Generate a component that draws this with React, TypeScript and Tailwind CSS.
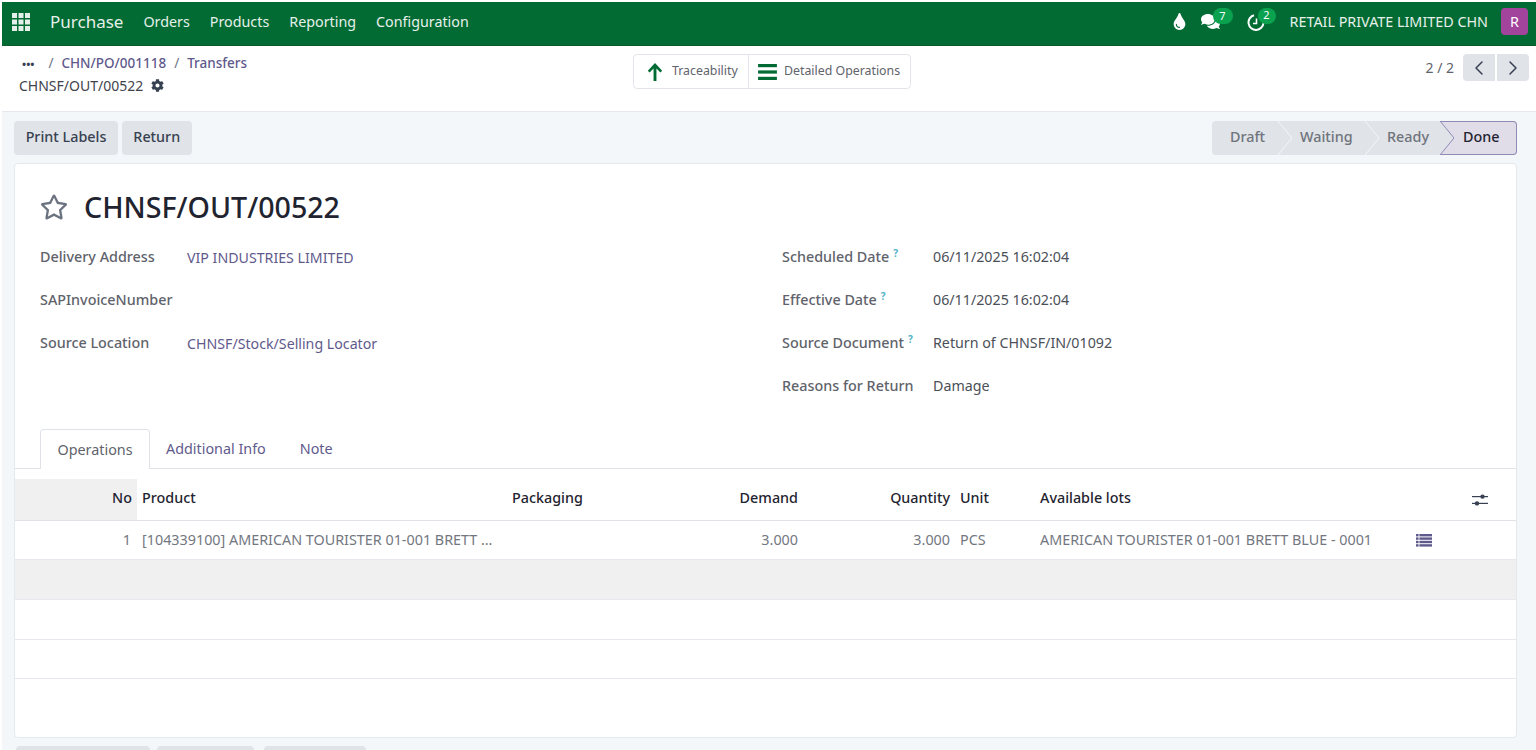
import { FaCog, FaComments, FaRegStar, FaTint } from "react-icons/fa"
import { ChevronLeft, ChevronRight } from "lucide-react"

const columns = "grid grid-cols-[122px_370px_146px_150px_152px_80px_371px_60px_49px]"

function AppsIcon() {
  return (
    <svg viewBox="0 0 18 18" className="h-[18px] w-[18px] fill-[#e6f0ea]">
      {[0, 6.5, 13].map((y) =>
        [0, 6.5, 13].map((x) => <rect key={`${x}-${y}`} x={x} y={y} width="5" height="5" />),
      )}
    </svg>
  )
}

function ActivityIcon() {
  return (
    <svg viewBox="0 0 18 18" className="h-[18px] w-[18px] fill-none stroke-white stroke-2">
      <path d="M7 2.2A7.5 7.5 0 1 0 16.5 10" />
      <path d="M9.5 5.5v5H6" strokeWidth="1.6" />
    </svg>
  )
}

function SlidersIcon() {
  return (
    <svg viewBox="0 0 16 14" className="h-[14px] w-[16px] fill-[#374151]">
      <rect x="0" y="3" width="16" height="1.2" />
      <rect x="0" y="9.8" width="16" height="1.2" />
      <circle cx="10.5" cy="3.6" r="2.2" />
      <circle cx="5" cy="10.4" r="2.2" />
    </svg>
  )
}

function ListIcon() {
  return (
    <svg viewBox="0 0 16 13" className="h-[13px] w-[16px] fill-[#5f5a8c]">
      {[0, 3.4, 6.8, 10.2].map((y) => (
        <g key={y}>
          <rect x="0" y={y} width="2.6" height="2.4" />
          <rect x="3.4" y={y} width="12.6" height="2.4" />
        </g>
      ))}
    </svg>
  )
}

function Field({ label, help, value, link, labelWidth }: { label: string; help?: boolean; value?: string; link?: boolean; labelWidth: string }) {
  return (
    <div className="flex h-[43px] items-center">
      <div className={`${labelWidth} font-medium text-[#5f636b]`}>
        {label}
        {help && <sup className="ml-1 text-[10px] font-bold text-[#4fb3c8]">?</sup>}
      </div>
      {value && <div className={link ? "mt-[2px] text-[14.2px] text-[#5f5a8c]" : "text-[14.25px] text-[#4b5058]"}>{value}</div>}
    </div>
  )
}

function StatusStep({ label, width, padding }: { label: string; width: string; padding: string }) {
  return (
    <div className={`relative flex h-full items-center pb-[2px] font-medium text-[#6f747c] ${width} ${padding}`}>
      {label}
      <svg viewBox="0 0 14 34" className="absolute left-full top-0 h-[34px] w-[14px] fill-none stroke-[#f4f7f9]">
        <path d="M0 0 14 17 0 34" />
      </svg>
    </div>
  )
}

export default function App() {
  return (
    <div className="flex h-[750px] w-[1536px] flex-col overflow-hidden bg-white pl-[2px] pt-[2px] text-[14.35px] font-['Noto_Sans',sans-serif]">
      {/* Navbar */}
      <div className="flex h-[44px] shrink-0 items-center border-b border-[#0a5a2e] bg-[#016b33] pb-[4px] text-[#e6f0ea]">
        <div className="ml-[10px] mr-[20px]">
          <AppsIcon />
        </div>
        <div className="mr-[20px] text-[17px]">Purchase</div>
        <div className="flex gap-[20px] text-[14.3px]">
          <span>Orders</span>
          <span>Products</span>
          <span>Reporting</span>
          <span>Configuration</span>
        </div>
        <div className="ml-auto flex items-center">
          <FaTint className="mr-[15px] h-[17px] w-[13px] text-white" />
          <div className="relative mr-[27px]">
            <FaComments className="h-[17px] w-[19px] text-white" />
            <span className="absolute -top-[5px] left-[12px] flex h-[16px] w-[20px] items-center justify-center rounded-full bg-[#0aa14f] text-[11px] text-white">7</span>
          </div>
          <div className="relative mr-[25px]">
            <ActivityIcon />
            <span className="absolute -top-[5px] left-[11px] flex h-[16px] w-[18px] items-center justify-center rounded-full bg-[#0aa14f] text-[11px] text-white">2</span>
          </div>
          <span className="mr-[13px]">RETAIL PRIVATE LIMITED CHN</span>
          <div className="mr-[8px] flex h-[27px] w-[27px] items-center justify-center rounded-[4px] bg-[#a2449c] text-white">R</div>
        </div>
      </div>

      {/* Control panel */}
      <div className="flex h-[66px] shrink-0 border-b border-[#e5e8ec]">
        <div className="w-[631px] pl-[17px] pt-[7px]">
          <div className="flex items-center text-[13.5px] text-[#5f5a8c]">
            <span className="ml-[3px] mr-[14px] text-[11px] font-bold leading-none text-[#374151]">•••</span>
            <span className="mr-[8px] text-[#6b7280]">/</span>
            <span className="font-medium">CHN/PO/001118</span>
            <span className="mx-[8px] text-[#6b7280]">/</span>
            <span className="font-medium">Transfers</span>
          </div>
          <div className="mt-[2px] flex items-center text-[14px] text-[#3f444c]">
            CHNSF/OUT/00522
            <FaCog className="ml-[8px] h-[13px] w-[13px] text-[#374151]" />
          </div>
        </div>
        <div className="mt-[8px] flex h-[35px] rounded-[4px] border border-[#e2e6ea] text-[12.35px] text-[#5f636b]">
          <div className="flex w-[115px] items-center border-r border-[#e2e6ea] pl-[13px]">
            <svg viewBox="0 0 16 20" className="mr-[9px] h-[18px] w-[16px] fill-[#016b33]">
              <path d="M8 0 16 8.5 14 10.5 9.6 6V20H6.4V6L2 10.5 0 8.5Z" />
            </svg>
            Traceability
          </div>
          <div className="flex w-[161px] items-center pl-[9px]">
            <svg viewBox="0 0 20 17" className="mr-[7px] h-[16px] w-[19px] fill-[#016b33]">
              <rect width="20" height="3.4" />
              <rect y="6.8" width="20" height="3.4" />
              <rect y="13.6" width="20" height="3.4" />
            </svg>
            Detailed Operations
          </div>
        </div>
        <div className="ml-auto mr-[7px] mt-[8px] flex items-start">
          <span className="mr-[9px] mt-[3px] text-[14px] text-[#5f636b]">2 / 2</span>
          <div className="flex gap-[2px]">
            <div className="flex h-[27px] w-[32px] items-center justify-center rounded-l-[4px] bg-[#e0e3e7]">
              <ChevronLeft className="h-6 w-6 text-[#374151]" strokeWidth={1.5} />
            </div>
            <div className="flex h-[27px] w-[32px] items-center justify-center rounded-r-[4px] bg-[#e0e3e7]">
              <ChevronRight className="h-6 w-6 text-[#374151]" strokeWidth={1.5} />
            </div>
          </div>
        </div>
      </div>

      {/* Content */}
      <div className="flex min-h-0 flex-1 flex-col bg-[#f4f7f9] pl-[12px] pr-[19px] pt-[9px]">
        <div className="mb-[8px] flex h-[34px] shrink-0 items-stretch justify-between">
          <div className="flex gap-[4px] font-medium text-[#374151]">
            <div className="flex w-[104px] items-center justify-center rounded-[4px] bg-[#e0e3e7] pb-[3px]">Print Labels</div>
            <div className="flex w-[69.5px] items-center justify-center rounded-[4px] bg-[#e0e3e7] pb-[3px]">Return</div>
          </div>
          <div className="flex items-center rounded-[4px] bg-[#e0e3e7]">
            <StatusStep label="Draft" width="w-[66px]" padding="pl-[18px]" />
            <StatusStep label="Waiting" width="w-[87px]" padding="pl-[22px]" />
            <div className="flex h-full w-[75px] items-center pb-[2px] pl-[22px] font-medium text-[#6f747c]">Ready</div>
            <div className="relative flex h-full w-[77px] items-center rounded-r-[4px] border border-l-0 border-[#8f8bb5] bg-[#e0dce8] pb-[2px] pl-[23px] font-medium text-[#1f2430]">
              Done
              <svg viewBox="0 0 14 34" className="absolute -top-px left-0 h-[34px] w-[14px] fill-[#e0e3e7] stroke-[#8f8bb5]">
                <path d="M0 0 14 17 0 34" />
              </svg>
            </div>
          </div>
        </div>

        <div className="h-[575px] shrink-0 overflow-hidden rounded-[4px] border border-[#e5e8ec] bg-white">
          <div className="flex items-center pl-[25px] pt-[24px]">
            <FaRegStar className="mr-[16px] h-[28px] w-[28px] text-[#6b7280]" />
            <h1 className="text-[28.6px] font-medium leading-[38px] text-[#1f2430]">CHNSF/OUT/00522</h1>
          </div>

          <div className="mt-[9px] grid grid-cols-[742px_1fr] pl-[25px]">
            <div>
              <Field label="Delivery Address" value="VIP INDUSTRIES LIMITED" link labelWidth="w-[147px]" />
              <Field label="SAPInvoiceNumber" labelWidth="w-[147px]" />
              <Field label="Source Location" value="CHNSF/Stock/Selling Locator" link labelWidth="w-[147px]" />
            </div>
            <div>
              <Field label="Scheduled Date" help value="06/11/2025 16:02:04" labelWidth="w-[151px]" />
              <Field label="Effective Date" help value="06/11/2025 16:02:04" labelWidth="w-[151px]" />
              <Field label="Source Document" help value="Return of CHNSF/IN/01092" labelWidth="w-[151px]" />
              <Field label="Reasons for Return" value="Damage" labelWidth="w-[151px]" />
            </div>
          </div>

          {/* Tabs */}
          <div className="mt-[22px] flex h-[40px] items-stretch border-b border-[#dfe3e8] pl-[25px]">
            <div className="-mb-px flex w-[110px] items-center justify-center rounded-t-[4px] border border-b-0 border-[#dfe3e8] bg-white text-[#5f636b]">Operations</div>
            <div className="ml-[16px] flex items-center text-[#5f5a8c]">Additional Info</div>
            <div className="ml-[34px] flex items-center text-[#5f5a8c]">Note</div>
          </div>

          {/* Lines */}
          <div className="mt-[10px]">
            <div className={`${columns} h-[42px] items-center border-b border-[#dfe3e8] font-medium text-[#1f2430]`}>
              <div className="flex h-full items-center justify-end bg-[#f0f0f0] pb-[4px] pr-[5px]">No</div>
              <div className="pb-[4px] pl-[5px]">Product</div>
              <div className="pb-[4px] pl-[5px]">Packaging</div>
              <div className="pb-[4px] pr-[5px] text-right">Demand</div>
              <div className="pb-[4px] pr-[5px] text-right">Quantity</div>
              <div className="pb-[4px] pl-[5px]">Unit</div>
              <div className="pb-[4px] pl-[5px]">Available lots</div>
              <div />
              <div className="pl-[6px]">
                <SlidersIcon />
              </div>
            </div>
            <div className={`${columns} h-[39px] items-center border-b border-[#e5e8ec] text-[#73777f]`}>
              <div className="pr-[6px] text-right">1</div>
              <div className="truncate pl-[5px] pr-[9px]">[104339100] AMERICAN TOURISTER 01-001 BRETT …</div>
              <div />
              <div className="pr-[5px] text-right">3.000</div>
              <div className="pr-[5px] text-right">3.000</div>
              <div className="pl-[5px]">PCS</div>
              <div className="whitespace-nowrap pl-[5px]">AMERICAN TOURISTER 01-001 BRETT BLUE - 0001</div>
              <div className="pl-[10px]">
                <ListIcon />
              </div>
              <div />
            </div>
            <div className="h-[40px] border-b border-[#e5e8ec] bg-[#f0f0f0]" />
            <div className="h-[40px] border-b border-[#e5e8ec]" />
            <div className="h-[39px] border-b border-[#e5e8ec]" />
          </div>
        </div>

        {/* Next buttons, cut off by the window */}
        <div className="mt-[8px] flex pl-[2px]">
          <div className="h-[8px] w-[134px] rounded-t-[4px] bg-[#e0e3e7]" />
          <div className="ml-[7px] h-[8px] w-[97px] rounded-t-[4px] bg-[#e0e3e7]" />
          <div className="ml-[10px] h-[8px] w-[102px] rounded-t-[4px] bg-[#e0e3e7]" />
        </div>
      </div>
    </div>
  )
}
